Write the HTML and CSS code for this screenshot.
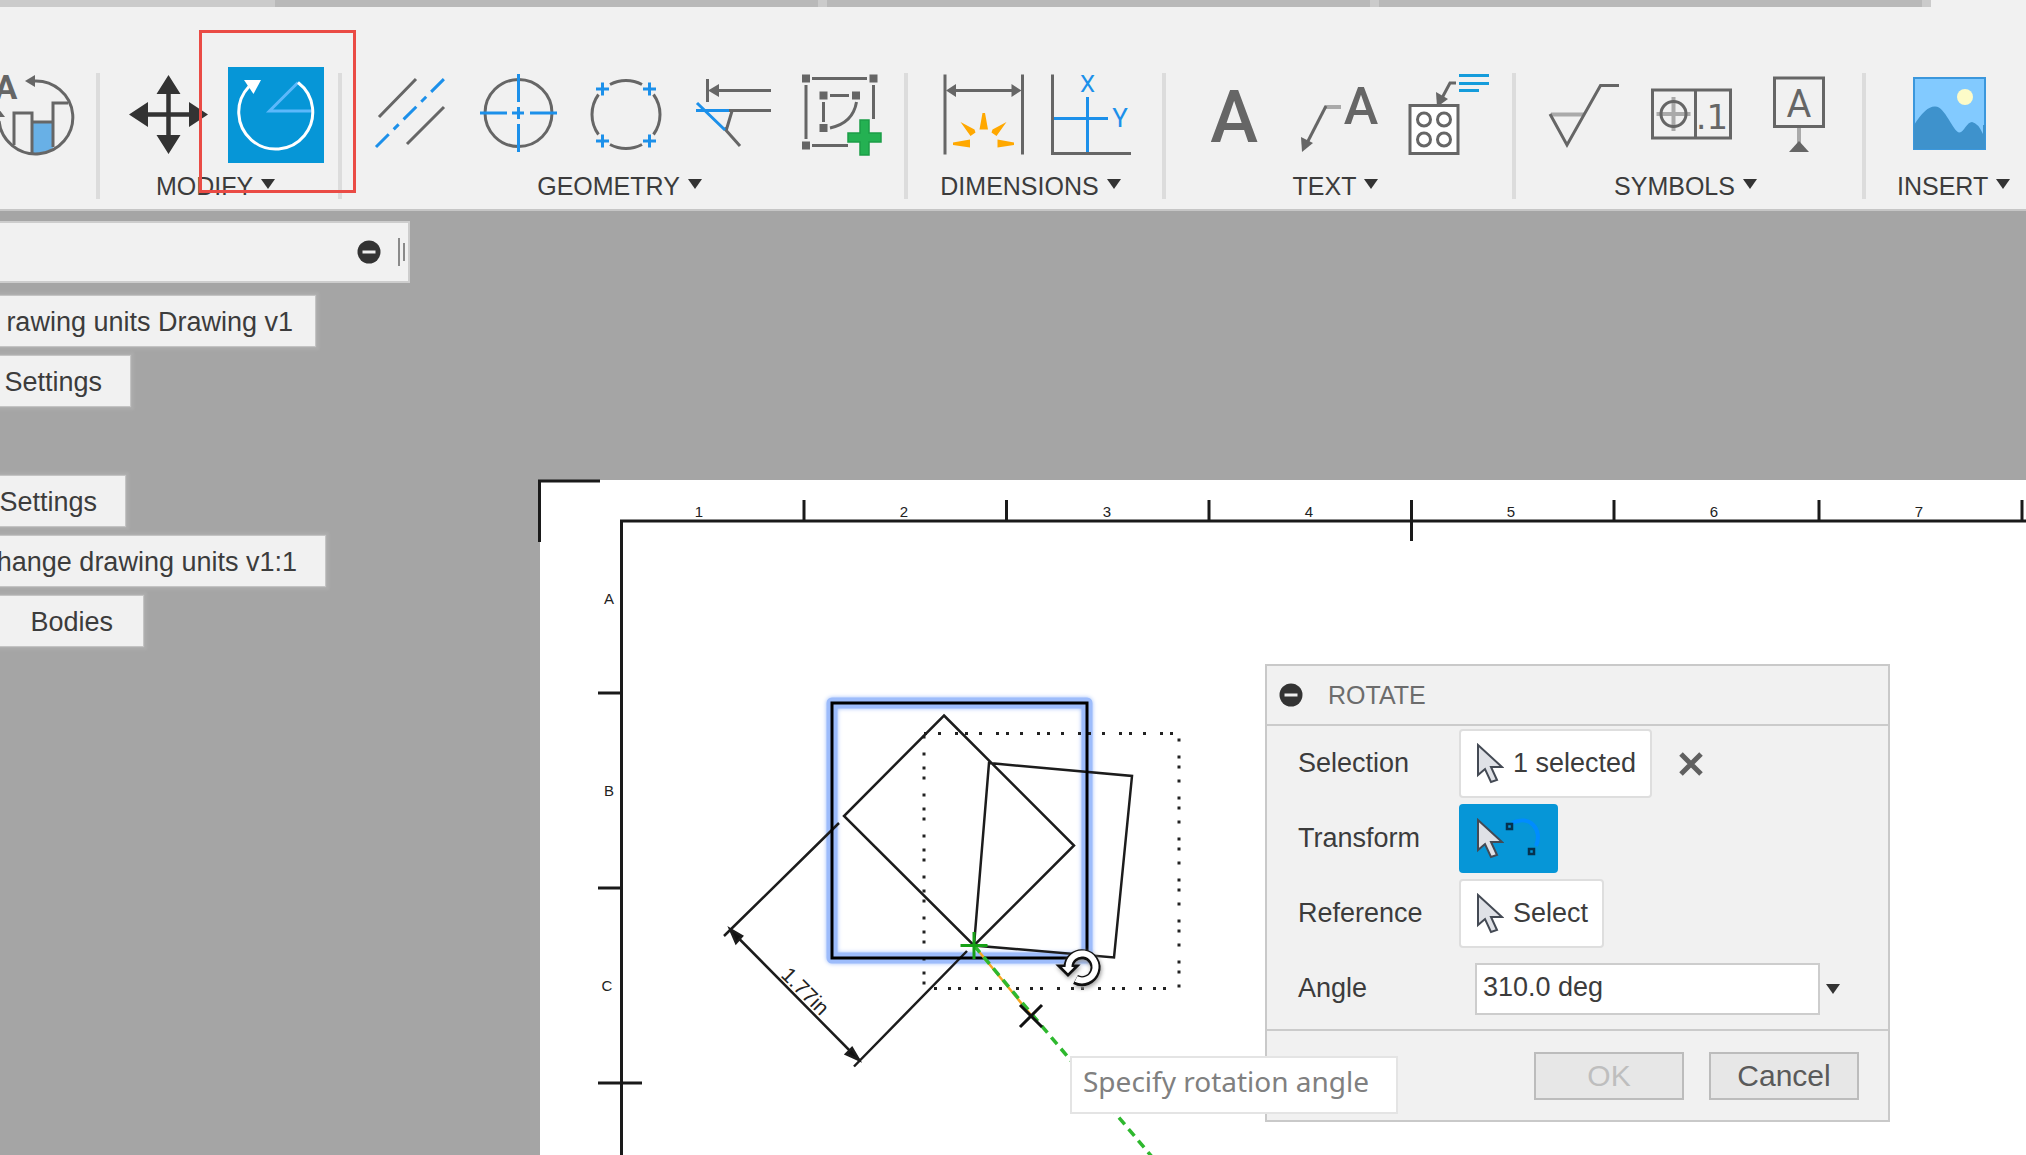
FILE: index.html
```html
<!DOCTYPE html>
<html lang="en">
<head>
<meta charset="utf-8">
<title>Drawing</title>
<link rel="stylesheet" href="styles.css">
</head>
<body>
<svg class="defs" aria-hidden="true">
  <symbol id="caret" viewBox="0 0 16 10"><path d="M1 0h14L8 10z" fill="#333"/></symbol>
  <symbol id="minus" viewBox="0 0 24 24"><circle cx="12" cy="12" r="11.500" fill="#333"/><path d="M5.500 12h13" stroke="#eee" stroke-width="3"/></symbol>
  <symbol id="pointer" viewBox="0 0 28 42"><path d="M2 2v30l7-6 6 13 6-2-6-13h11z" fill="#dfe1e6" stroke="#444a54" stroke-width="2"/></symbol>
</svg>

<div class="tabs">
  <div class="tab tab-active"></div>
  <div class="tab"></div>
  <div class="tab"></div>
  <div class="tab"></div>
</div>

<header class="toolbar">
  <section class="group group-cut">
    <div class="tools">
      <button class="tool" aria-label="Text style">
        <svg viewBox="0 0 96 96" class="ink">
          <path d="M45 55h21v26q-9 6-21 5z" fill="#68b0e6" stroke="none"/>
          <path d="M27 78V46h18v40M81 36H66v44M45 55h21"/>
          <path d="M46 14a37 36.500 0 1 1-34 40"/>
          <path d="M38 14l10-6v12z" class="solid"/><path d="M11 41l7 9H6z" class="solid"/>
          <text x="19" y="32" class="glyph glyph-heavy" font-size="34">A</text>
        </svg>
      </button>
    </div>
  </section>
  <i class="sep"></i>
  <section class="group">
    <div class="tools">
      <button class="tool" aria-label="Move">
        <svg viewBox="0 0 96 96" fill="#333"><path d="M48.500 20v56M20 47.500h57" stroke="#333" stroke-width="4.500"/><path d="M48.500 8l12 19h-24zM48.500 87l12-19h-24zM9 47.500l19-12.500v25zM88 47.500L69 35v25z"/></svg>
      </button>
      <button class="tool tool-on" aria-label="Rotate">
        <svg viewBox="0 0 96 96" fill="none" stroke-width="3"><path d="M84.500 44h-43l28.500-28.500" stroke="#5cb8fb"/><path d="M70 15.500A37 37 0 1 1 21 19.500" stroke="#fff"/><path d="M16 13h17l-7.500 14z" fill="#fff"/></svg>
      </button>
    </div>
    <button class="menu">MODIFY <svg class="caret"><use href="#caret"/></svg></button>
  </section>
  <i class="sep"></i>
  <section class="group">
    <div class="tools">
      <button class="tool" aria-label="Centerline">
        <svg viewBox="0 0 96 96" class="ink"><path d="M17 50l37-38M45 77l37-37"/><path d="M14 80l68-68" class="blue" stroke-dasharray="18 7 7 7"/></svg>
      </button>
      <button class="tool" aria-label="Center mark">
        <svg viewBox="0 0 96 96" class="ink"><circle cx="48.500" cy="46" r="33.500"/><path class="blue" d="M48.500 7v28M48.500 40v12M48.500 57v28M10 46h27M42 46h12M60 46h27"/></svg>
      </button>
      <button class="tool" aria-label="Center mark pattern">
        <svg viewBox="0 0 96 96" class="ink"><path d="M32 17.500a34 34 0 0 1 32 0M32 77.500a34 34 0 0 0 32 0M20.500 27.500a34 34 0 0 0 0 40M75.500 27.500a34 34 0 0 1 0 40"/><path class="blue" d="M18 22h13M24.500 15.500v13M65 22h13M71.500 15.500v13M18 74h13M24.500 67.500v13M65 74h13M71.500 67.500v13"/></svg>
      </button>
      <button class="tool" aria-label="Edge extension">
        <svg viewBox="0 0 96 96" class="ink"><path d="M21.500 12v23M28 23.500h57M43 43.500h42M46 44l-6 20M38 61l16 18"/><path d="M22 23.500l11-6.500v13z" class="solid"/><path class="blue" d="M10 43.500h33M11 36l28 27"/></svg>
      </button>
      <button class="tool" aria-label="Create sketch">
        <svg viewBox="0 0 96 96" class="ink"><path d="M18 11.500h55M12 18v54M79.500 18v34M18 78.500h36M36 28.500h19M29.500 35v20M62.500 35Q59 56 36 61"/><path class="solid" d="M8 7.500h8v8H8zM75.500 7.500h8v8h-8zM8 74.500h8v8H8zM25.500 24.500h8v8h-8zM58 24.500h8v8h-8zM25.500 57h8v8h-8z"/><path d="M66 53h9v13h12v9H75v13h-9V75H54v-9h12z" fill="#24b152" stroke="#1b9d47" stroke-width="1.500"/></svg>
      </button>
    </div>
    <button class="menu">GEOMETRY <svg class="caret"><use href="#caret"/></svg></button>
  </section>
  <i class="sep"></i>
  <section class="group group-wide">
    <div class="tools">
      <button class="tool" aria-label="Dimension">
        <svg viewBox="0 0 96 96" class="ink"><path d="M10 7.500v80M87.500 7.500v80M18 23.500h62"/><path class="solid" d="M11 23.500l10-6.500v13zM86.500 23.500L76.500 17v13z"/><path fill="#ffa800" stroke="none" d="M47.500 46h2.500l3 16.500h-8.500zM25.500 55l14 7.500 1 3-5 3.500zM71.500 55l-14 7.500-1 3 5 3.500zM18 75.500l17-3v8l-17-2.500zM79 75.500l-16.500-3v8L79 78z"/></svg>
      </button>
      <button class="tool" aria-label="Ordinate dimension">
        <svg viewBox="0 0 96 96" class="ink"><path class="blue" d="M10 51.500h55M44.500 30v56"/><path d="M9.500 7.500v79H88"/><text x="44.500" y="25" class="glyph glyph-blue" font-size="24">X</text><text x="77" y="60" class="glyph glyph-blue" font-size="26">Y</text></svg>
      </button>
    </div>
    <button class="menu">DIMENSIONS <svg class="caret"><use href="#caret"/></svg></button>
  </section>
  <i class="sep"></i>
  <section class="group">
    <div class="tools">
      <button class="tool" aria-label="Text">
        <svg viewBox="0 0 96 96"><text x="48" y="75" class="glyph glyph-bold" font-size="72">A</text></svg>
      </button>
      <button class="tool" aria-label="Leader text">
        <svg viewBox="0 0 96 96" class="ink"><path d="M47 40H31" class="pale"/><path d="M32 39L13 76"/><path class="solid" d="M7 70l12 6-11 9z"/><text x="67" y="57" class="glyph glyph-bold" font-size="52">A</text></svg>
      </button>
      <button class="tool" aria-label="Bend table">
        <svg viewBox="0 0 96 96" class="ink"><path d="M8 38.500h48v48H8z" fill="#fff"/><circle cx="22" cy="52.500" r="6.500"/><circle cx="42" cy="52.500" r="6.500"/><circle cx="22" cy="72.500" r="6.500"/><circle cx="42" cy="72.500" r="6.500"/><path d="M54 16h-6l-8 15"/><path class="solid" d="M34 25l12 7-11 8z"/><path d="M57 8.500h30M57 16.500h30M57 23.500h20" stroke="#159cdb"/></svg>
      </button>
    </div>
    <button class="menu">TEXT <svg class="caret"><use href="#caret"/></svg></button>
  </section>
  <i class="sep"></i>
  <section class="group">
    <div class="tools">
      <button class="tool" aria-label="Surface texture">
        <svg viewBox="0 0 96 96" class="ink"><path d="M15 47.500h33" class="pale"/><path d="M14 47l17 31 33.500-59.500H83"/></svg>
      </button>
      <button class="tool" aria-label="Feature control frame">
        <svg viewBox="0 0 96 96" class="ink"><path class="pale" d="M12.500 47h34M29.500 30v34"/><path d="M8.500 23h78v48h-78zM51.500 23v48"/><circle cx="29.500" cy="47" r="12.500"/><text x="68" y="62" class="glyph glyph-num" font-size="34">.1</text></svg>
      </button>
      <button class="tool" aria-label="Datum identifier">
        <svg viewBox="0 0 96 96" class="ink"><path class="pale" d="M47 60v16"/><path d="M22.500 11h49v48.500h-49z"/><path class="solid" d="M37 85h20L47 74z"/><text x="47" y="50" class="glyph" font-size="38">A</text></svg>
      </button>
    </div>
    <button class="menu">SYMBOLS <svg class="caret"><use href="#caret"/></svg></button>
  </section>
  <i class="sep"></i>
  <section class="group group-last">
    <div class="tools">
      <button class="tool" aria-label="Insert image">
        <svg viewBox="0 0 96 96"><path d="M13 11h71v71H13z" fill="#82caff" stroke="#3b97dc" stroke-width="2"/><path d="M13 58Q25 39 34 39.500C44 39 52 65 58.500 65.500C63 65 66 55 71 55Q77 56 82 67V58h2v24H13z" fill="#3e92cc"/><circle cx="64" cy="30" r="8" fill="#fdfbc8"/></svg>
      </button>
    </div>
    <button class="menu">INSERT <svg class="caret"><use href="#caret"/></svg></button>
  </section>
</header>

<main class="workspace">
  <svg class="canvas" aria-label="Drawing sheet">
    <g transform="translate(0 -211)">
      <rect x="540" y="480" width="100%" height="100%" fill="#fff"/>
      <g class="frame">
        <path d="M539.500 542V481H600" />
        <path d="M621.500 1200V521H2600M804 500v21M1006.500 500v21M1209 500v21M1411.500 500v41M1614 500v21M1819 500v21M2022 500v21M598 693h23M598 888h23M598 1083h44"/>
      </g>
      <g class="zone">
        <text x="699" y="517">1</text><text x="904" y="517">2</text><text x="1107" y="517">3</text><text x="1309" y="517">4</text><text x="1511" y="517">5</text><text x="1714" y="517">6</text><text x="1919" y="517">7</text>
        <text x="609" y="604">A</text><text x="609" y="796">B</text><text x="607" y="991">C</text>
      </g>
      <rect x="832" y="703" width="255" height="255" class="halo"/>
      <path d="M924 733.500h255v255H924z" fill="none" stroke="#222" stroke-width="3" stroke-dasharray="3 11 3 14 3 7"/>
      <g class="lines">
        <path d="M944 715.500L1074 845.500 974 945.500 844 816zM989 763l143 13-18 181.500L974 945.500z"/>
        <path d="M839 823L724 936M967 951L854 1066.500M730 929.500L859 1060"/>
        <path d="M730 929l12 7-6 7zM859 1060l-7-12-6 6z" fill="#111"/>
        <rect x="832" y="703" width="255" height="255" stroke="#000" stroke-width="3"/>
      </g>
      <text transform="translate(780 976) rotate(45)" class="dim">1.77in</text>
      <path d="M974 945.500L1031 1015" stroke="#f5a623" stroke-width="2.500"/>
      <path d="M974 945.500L1185 1196" stroke="#2eb82e" stroke-width="3.500" stroke-dasharray="9 6"/>
      <path d="M960.500 945.500h27M974 932v27" stroke="#16a016" stroke-width="3"/>
      <path d="M1020 1005l22 22M1042 1005l-22 22" stroke="#111" stroke-width="3"/>
      <g class="spin">
        <path d="M1068.500 968a13.500 13.500 0 1 1 7 11.500" class="spin-edge"/><path d="M1059 966h18l-9 9z" class="spin-tip"/>
        <path d="M1068.500 967a13.500 13.500 0 1 1 7.500 12" class="spin-core"/><path d="M1062 967h12l-6 6z" fill="#fff"/>
      </g>
    </g>
  </svg>

  <aside class="browser">
    <div class="browser-head">
      <button class="icon-btn" aria-label="Collapse browser"><svg class="disc"><use href="#minus"/></svg></button>
      <span class="grip"><i></i><i></i></span>
    </div>
    <ul class="tree">
      <li class="node node-a">rawing units Drawing v1</li>
      <li class="node node-b">Settings</li>
      <li class="node node-none"></li>
      <li class="node node-c">Settings</li>
      <li class="node node-d">hange drawing units v1:1</li>
      <li class="node node-e">Bodies</li>
    </ul>
  </aside>

  <form class="dialog">
    <div class="dialog-head">
      <button type="button" class="icon-btn" aria-label="Collapse"><svg class="disc"><use href="#minus"/></svg></button>
      <h2>ROTATE</h2>
    </div>
    <div class="rows">
      <div class="row">
        <label for="sel">Selection</label>
        <button type="button" id="sel" class="pick"><svg class="pointer"><use href="#pointer"/></svg>1 selected</button>
        <button type="button" class="icon-btn clear" aria-label="Clear selection"><svg class="disc" viewBox="0 0 24 24"><path d="M2 2l20 20M22 2L2 22" stroke="#606060" stroke-width="5"/></svg></button>
      </div>
      <div class="row">
        <label for="trans">Transform</label>
        <button type="button" id="trans" class="pick pick-on" aria-label="Transform"><svg class="pointer"><use href="#pointer"/></svg><svg class="arc" viewBox="0 0 38 42" fill="none"><path d="M8 5C26-4 39 12 32 28" stroke="#008cff" stroke-width="4"/><path d="M3 6h5v5H3zM25 31h5v5h-5z" stroke="#06314d" stroke-width="2.500"/></svg></button>
      </div>
      <div class="row">
        <label for="ref">Reference</label>
        <button type="button" id="ref" class="pick"><svg class="pointer"><use href="#pointer"/></svg>Select</button>
      </div>
      <div class="row">
        <label for="angle">Angle</label>
        <input id="angle" class="angle" type="text" value="310.0 deg">
        <button type="button" class="icon-btn" aria-label="Angle options"><svg class="caret"><use href="#caret"/></svg></button>
      </div>
    </div>
    <div class="actions">
      <button type="button" class="action" disabled>OK</button>
      <button type="button" class="action">Cancel</button>
    </div>
  </form>

  <div class="tooltip" role="tooltip">Specify rotation angle</div>
</main>
<div class="callout"></div>
</body>
</html>
```
FILE: styles.css
```css
* { box-sizing: border-box; }

body {
  margin: 0;
  min-height: 100vh;
  display: flex;
  flex-direction: column;
  position: relative;
  overflow: hidden;
  background: #f1f1f1;
  color: #3c3c3c;
  font-family: "Liberation Sans", Arial, sans-serif;
}

button, input { font: inherit; color: inherit; }
button { border: 0; padding: 0; background: none; }
svg { display: block; }
.defs { display: none; }

/* document tabs */
.tabs { display: flex; height: 7px; flex: none; }
.tab { width: 552px; flex: none; background: #b9b9b9; border-right: 9px solid #cbcbcb; }
.tab-active { width: 275px; background: #cbcbcb; border: 0; }

/* toolbar */
.toolbar {
  display: flex;
  flex: none;
  overflow: hidden;
  padding: 60px 0 6px;
  border-bottom: 2px solid #c6c6c6;
}
.group { flex: none; padding: 0 14px 0 20px; display: flex; flex-direction: column; gap: 8px; }
.group-wide { padding: 0 23px 0 27px; }
.group-cut { padding: 0 13px 0 0; margin-left: -13px; }
.group-last { padding: 0 0 0 31px; }
.tools { display: flex; gap: 12px; }
.group-last .tools { padding-left: 4px; }
.tool { width: 96px; height: 96px; }
.tool svg { width: 96px; height: 96px; }
.tool-on { background: #0696d7; }
.sep { width: 4px; margin: 6px 0 4px; background: #dcdcdc; flex: none; }
.menu {
  display: flex;
  align-items: center;
  justify-content: center;
  gap: 7px;
  padding-right: 12px;
  padding-bottom: 2px;
  font-size: 25px;
  line-height: 30px;
  white-space: nowrap;
}
.group-last .menu { padding-right: 0; justify-content: flex-start; }
.caret { width: 16px; height: 10px; }
.menu .caret { margin-bottom: 4px; }

.ink { fill: none; stroke: #666; stroke-width: 3; }
.ink .solid { fill: #666; stroke: none; }
.ink .blue { stroke: #1c90ea; }
.ink .pale { stroke: #aaa; stroke-width: 4; }
.glyph { fill: #666; stroke: none; font-family: Roboto, sans-serif; text-anchor: middle; }
.glyph-bold { font-weight: 500; }
.glyph-heavy { font-weight: 700; }
.glyph-blue { fill: #1c90ea; }
.glyph-num { font-family: "DejaVu Sans", sans-serif; }

/* workspace */
.workspace { flex: 1; position: relative; overflow: hidden; background: #a5a5a5; }
.canvas { position: absolute; inset: 0; width: 100%; height: 100%; }
.frame { fill: none; stroke: #1a1a1a; stroke-width: 3; }
.zone { font-size: 15px; fill: #222; text-anchor: middle; }
.lines { fill: none; stroke: #1c1c1c; stroke-width: 2.5; }
.halo { fill: none; stroke: #9dbcfb; stroke-width: 11; stroke-linejoin: round; filter: drop-shadow(0 0 2px #9dbcfb); }
.dim { font-size: 21px; fill: #222; }
.spin { fill: none; filter: drop-shadow(1px 2px 2px #999); }
.spin-edge { stroke: #111; stroke-width: 10; }
.spin-core { stroke: #fff; stroke-width: 6; }
.spin-tip { fill: #fff; stroke: #111; stroke-width: 3; }

/* browser tree */
.browser { position: relative; padding-top: 10px; width: 410px; }
.browser-head {
  display: flex;
  align-items: center;
  justify-content: flex-end;
  gap: 17px;
  height: 62px;
  padding-right: 3px;
  background: #f1f1f1;
  border: 2px solid #cdcdcd;
  border-left: 0;
}
.disc { width: 24px; height: 24px; }
.grip { display: flex; align-items: center; gap: 3px; }
.grip i { width: 2px; height: 28px; background: #8a8a8a; }
.grip i + i { height: 18px; }
.tree { list-style: none; margin: 13px 0 0; padding: 0; display: flex; flex-direction: column; gap: 10px; }
.node {
  display: flex;
  justify-content: flex-end;
  height: 50px;
  padding-right: 28px;
  background: #f1f1f1;
  box-shadow: 0 0 1px 1px #c4c4c4, 0 0 3px 4px #acacac;
  font-size: 27px;
  line-height: 52px;
  white-space: nowrap;
}
.node-a { width: 315px; padding-right: 22px; }
.node-b { width: 130px; }
.node-c { width: 125px; }
.node-d { width: 325px; }
.node-e { width: 143px; padding-right: 30px; }
.node-none { visibility: hidden; }

/* rotate dialog */
.dialog {
  position: absolute;
  left: 1265px;
  top: 453px;
  width: 625px;
  background: #f1f1f1;
  border: 2px solid #c9c9c9;
  font-size: 27px;
}
.dialog-head {
  display: flex;
  align-items: center;
  gap: 25px;
  height: 60px;
  padding-left: 12px;
  border-bottom: 2px solid #cbcbcb;
}
.dialog-head h2 { margin: 0; font-size: 25px; line-height: 28px; font-weight: 400; color: #6c6c6c; }
.rows { display: flex; flex-direction: column; gap: 6px; padding: 3px 0 6px 31px; }
.row { display: flex; align-items: center; height: 69px; }
.row label { width: 161px; flex: none; }
.pick {
  display: flex;
  align-items: center;
  gap: 9px;
  height: 69px;
  padding: 0 14px 0 15px;
  background: #fff;
  border: 2px solid #dedede;
  border-radius: 4px;
}
.pick-on { background: #0696d7; border-color: #0696d7; gap: 0; }
.pointer { width: 28px; height: 42px; }
.arc { width: 38px; height: 42px; }
.clear { margin-left: 27px; }
.angle {
  width: 345px;
  height: 52px;
  margin-left: 16px;
  margin-right: 5px;
  padding: 0 6px 2px;
  background: #fff;
  border: 2px solid #cdcdcd;
}
.actions {
  display: flex;
  justify-content: flex-end;
  gap: 25px;
  padding: 21px 29px 20px;
  border-top: 2px solid #cbcbcb;
}
.action {
  width: 150px;
  height: 48px;
  background: #e7e7e7;
  border: 2px solid #bcbcbc;
  font-size: 30px;
  line-height: 44px;
  color: #5a5a5a;
}
.action:disabled { color: #bebebe; }

.tooltip {
  position: absolute;
  left: 1070px;
  top: 845px;
  padding: 0 27px 8px 11px;
  background: #fff;
  border: 2px solid #e4e4e4;
  color: #808080;
  font-family: "Noto Sans", "Open Sans", sans-serif;
  font-size: 28px;
  line-height: 46px;
  white-space: nowrap;
}

/* highlight around the active tool */
.callout {
  position: absolute;
  left: 199px;
  top: 30px;
  width: 157px;
  height: 163px;
  border: 3px solid #ea4b45;
  pointer-events: none;
}
```
